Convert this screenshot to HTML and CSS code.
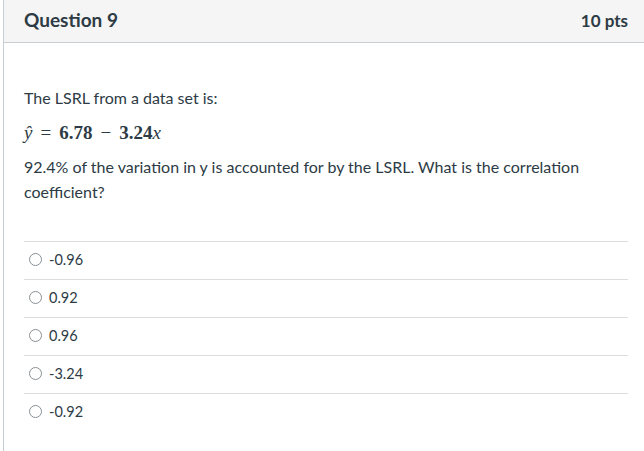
FILE: index.html
```html
<!DOCTYPE html>
<html>
<head>
<meta charset="utf-8">
<link rel="stylesheet" href="styles.css">
</head>
<body>
<div class="question">
  <div class="q-header">
    <span class="q-title">Question 9</span>
    <span class="q-pts">10 pts</span>
  </div>
  <div class="q-body">
    <p class="q-text">The LSRL from a data set is:</p>
    <p class="q-math"><span class="mi">ŷ</span><span class="mo">=</span><span class="mn">6.78</span><span class="mo">−</span><span class="mn">3.24</span><span class="mi">x</span></p>
    <p class="q-text">92.4% of the variation in y is accounted for by the LSRL. What is the correlation coefficient?</p>
    <div class="answers">
      <label class="answer"><span class="radio"></span><span class="a-text">-0.96</span></label>
      <label class="answer"><span class="radio"></span><span class="a-text">0.92</span></label>
      <label class="answer"><span class="radio"></span><span class="a-text">0.96</span></label>
      <label class="answer"><span class="radio"></span><span class="a-text">-3.24</span></label>
      <label class="answer"><span class="radio"></span><span class="a-text">-0.92</span></label>
    </div>
  </div>
</div>
</body>
</html>
```
FILE: styles.css
```css
html, body {
  margin: 0;
  padding: 0;
  background: #fff;
}
body {
  font-family: Lato, "Liberation Sans", sans-serif;
  color: #2d3b45;
}
.question {
  margin-left: 3px;
  border-left: 1px solid #c7cdd1;
  height: 451px;
}
.q-header {
  height: 42px;
  background: #f5f5f5;
  border-bottom: 1px solid #c7cdd1;
  display: flex;
  align-items: center;
  justify-content: space-between;
  padding: 0 16px 0 20px;
}
.q-title {
  font-weight: 700;
  font-size: 19px;
  color: #2d3b45;
  margin-top: -3px;
}
.q-pts {
  font-weight: 700;
  font-size: 17px;
  color: #2d3b45;
  margin-top: -2px;
}
.q-body {
  padding: 42px 16px 0 20px;
}
.q-text {
  margin: 0;
  font-size: 16px;
  line-height: 25px;
}
.q-math {
  margin: 10px 0 9px;
  font-family: "DejaVu Serif", "Liberation Serif", serif;
  font-size: 17px;
  line-height: 25px;
  display: flex;
  align-items: baseline;
}
.mi {
  font-style: italic;
  font-family: "Liberation Serif", serif;
  font-size: 19px;
}
.mn {
  font-family: "Liberation Serif", serif;
  font-weight: 700;
  font-size: 19px;
}
.mo {
  font-family: "Liberation Serif", serif;
  font-size: 19px;
  margin: 0 8px;
}
.answers {
  margin-top: 37px;
}
.answer {
  display: flex;
  align-items: center;
  height: 35px;
  padding-bottom: 2px;
  border-top: 1px solid #dddddd;
  padding-left: 5px;
  font-size: 14.5px;
}
.radio {
  width: 11px;
  height: 11px;
  border: 1px solid #8a8f93;
  border-radius: 50%;
  margin-right: 7px;
  box-sizing: content-box;
}
.a-text {
  color: #2d3b45;
}
```
